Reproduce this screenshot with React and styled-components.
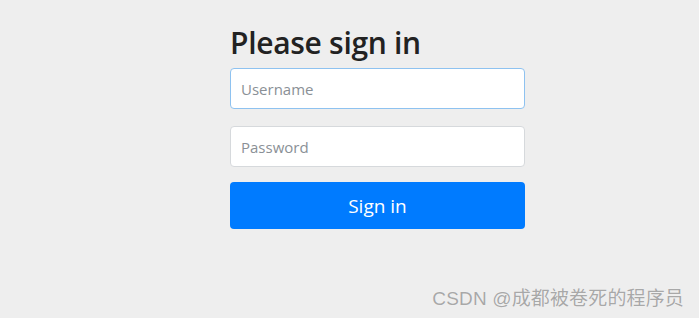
import React from "react";
import styled, { createGlobalStyle } from "styled-components";

const Global = createGlobalStyle`
	html, body {
		margin: 0;
		padding: 0;
		background: #eeeeee;
	}
	body {
		font-family: "Open Sans", "Noto Sans", sans-serif;
		color: #212529;
	}
`;

const Page = styled.div`
	position: relative;
	width: 699px;
	height: 318px;
	overflow: hidden;
`;

const Form = styled.form`
	width: 295px;
	margin-left: 230px;
	padding-top: 24px;
	display: flex;
	flex-direction: column;
`;

const Heading = styled.h2`
	margin: 0 0 6px;
	font-size: 30px;
	font-weight: 600;
	line-height: 38px;
	letter-spacing: -0.3px;
	color: #222;
`;

const Input = styled.input`
	box-sizing: border-box;
	height: 41px;
	padding: 0 10px;
	margin-bottom: ${(p) => p.$mb}px;
	font-family: "Open Sans", sans-serif;
	font-size: 15px;
	color: #495057;
	background: #fff;
	border: 1px solid ${(p) => (p.$focus ? "#8ec2f0" : "#d6d9dc")};
	border-radius: 4px;
	outline: none;

	&::placeholder {
		color: #8a9096;
	}
`;

const Button = styled.button`
	height: 47px;
	border: none;
	border-radius: 4px;
	background: #007bff;
	color: #fff;
	font-family: "Open Sans", sans-serif;
	font-size: 19px;
	cursor: pointer;
`;

const Watermark = styled.div`
	position: absolute;
	right: 15px;
	bottom: 8px;
	font-family: "Liberation Sans", "Noto Sans CJK SC", sans-serif;
	font-size: 19px;
	letter-spacing: 0.15px;
	color: #a8a8a8;
	text-shadow: 0 0 1px #fff;
`;

export default function App() {
	return (
		<Page>
			<Global />
			<Form onSubmit={(e) => e.preventDefault()}>
				<Heading>Please sign in</Heading>
				<Input $focus $mb={17} placeholder="Username" />
				<Input $mb={15} type="password" placeholder="Password" />
				<Button type="submit">Sign in</Button>
			</Form>
			<Watermark>CSDN @成都被卷死的程序员</Watermark>
		</Page>
	);
}
